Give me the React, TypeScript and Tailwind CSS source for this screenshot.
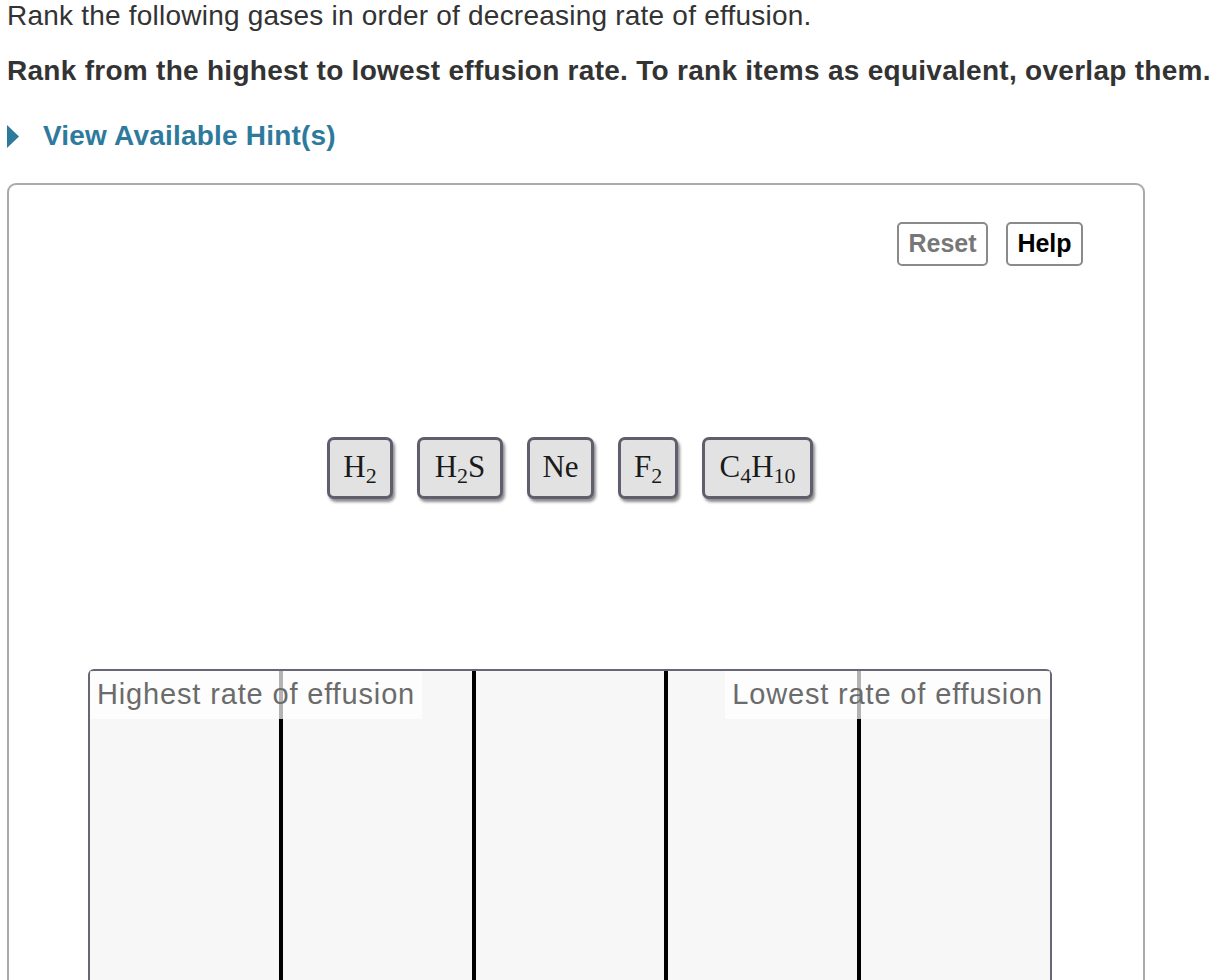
import React from "react";

function Tile({ w, children }: { w: number; children: React.ReactNode }) {
  const widths: Record<number, string> = {
    66: "w-[66px]",
    86: "w-[86px]",
    67: "w-[67px]",
    60: "w-[60px]",
    111: "w-[111px]",
  };
  return (
    <div
      className={`${widths[w]} h-[62px] shrink-0 border-[3px] border-[#5e5e6c] rounded-[7px] bg-[#e2e2e2] shadow-[2px_3px_3px_rgba(0,0,0,0.45)] flex items-center justify-center font-['Liberation_Serif',serif] text-[31px] leading-none text-[#1a1a1a]`}
    >
      <span className="-mt-[3px] whitespace-nowrap">{children}</span>
    </div>
  );
}

function Sub({ children }: { children: React.ReactNode }) {
  return <sub className="text-[22px]">{children}</sub>;
}

export default function App() {
  return (
    <div className="h-[980px] overflow-hidden bg-white pl-[7px] font-['Liberation_Sans',Arial,sans-serif] text-[#333]">
      <p className="text-[28px] leading-[32px] tracking-[0.22px] whitespace-nowrap">
        Rank the following gases in order of decreasing rate of effusion.
      </p>
      <p className="mt-[23px] text-[28px] leading-[32px] font-bold tracking-[0.28px] whitespace-nowrap">
        Rank from the highest to lowest effusion rate. To rank items as equivalent, overlap them.
      </p>
      <div className="mt-[33px] flex items-center h-[32px]">
        <svg width="12" height="23" viewBox="0 0 12 23" className="shrink-0">
          <path d="M0 0 L12 11.5 L0 23 Z" fill="#2e7a9c" />
        </svg>
        <span className="ml-[24px] text-[28px] leading-[32px] font-bold tracking-[0.2px] text-[#2e7a9c] whitespace-nowrap">
          View Available Hint(s)
        </span>
      </div>

      <div className="mt-[31px] w-[1138px] h-[900px] border-2 border-[#aaaaaa] rounded-[9px]">
        <div className="flex justify-end gap-[18px] pr-[60px] pt-[37px]">
          <button className="w-[91px] h-[44px] border-2 border-[#8a8a8a] rounded-[5px] bg-white text-[25px] font-bold text-[#777]">
            Reset
          </button>
          <button className="w-[77px] h-[44px] border-2 border-[#8a8a8a] rounded-[5px] bg-white text-[25px] font-bold text-black">
            Help
          </button>
        </div>

        <div className="ml-[79px] w-[964px] mt-[171px] flex justify-center gap-[24px]">
          <Tile w={66}>
            H<Sub>2</Sub>
          </Tile>
          <Tile w={86}>
            H<Sub>2</Sub>S
          </Tile>
          <Tile w={67}>Ne</Tile>
          <Tile w={60}>
            F<Sub>2</Sub>
          </Tile>
          <Tile w={111}>
            C<Sub>4</Sub>H<Sub>10</Sub>
          </Tile>
        </div>

        <div className="relative ml-[79px] mt-[170px] w-[964px] h-[420px] border-2 border-b-0 border-[#666674] rounded-t-[6px] bg-[#f7f7f7] flex">
          <div className="flex-1" />
          <div className="flex-1 border-l-4 border-black" />
          <div className="flex-1 border-l-4 border-black" />
          <div className="flex-1 border-l-4 border-black" />
          <div className="flex-1 border-l-4 border-black" />
          <div className="absolute left-0 top-0 h-[48px] px-[7px] flex items-center bg-white/70 text-[29px] tracking-[0.85px] text-[#6b6b6b] whitespace-nowrap">
            Highest rate of effusion
          </div>
          <div className="absolute right-0 top-0 h-[48px] px-[7px] flex items-center bg-white/70 text-[29px] tracking-[0.85px] text-[#6b6b6b] whitespace-nowrap">
            Lowest rate of effusion
          </div>
        </div>
      </div>
    </div>
  );
}
